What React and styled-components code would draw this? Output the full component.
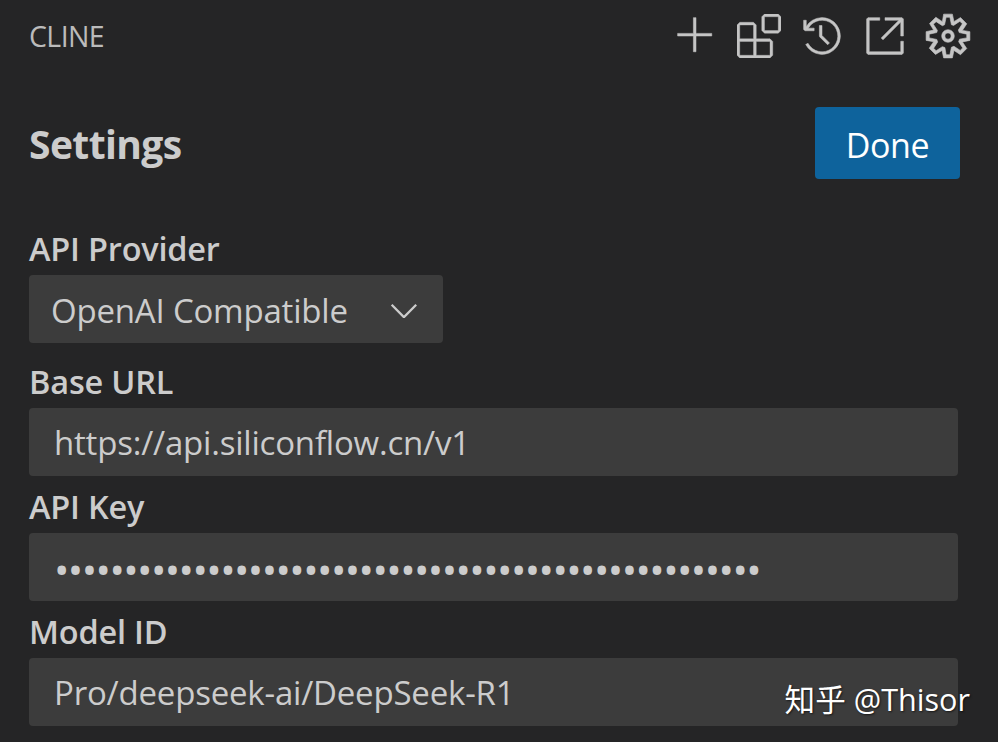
import React from 'react';
import styled, { createGlobalStyle } from 'styled-components';
import { VscAdd, VscExtensions, VscHistory, VscLinkExternal, VscGear, VscChevronDown } from 'react-icons/vsc';

const FONT = `"Open Sans", "Noto Sans", "Noto Sans CJK SC", sans-serif`;

const GlobalStyle = createGlobalStyle`
  html, body {
    margin: 0;
    padding: 0;
    background: #252526;
  }
  * { box-sizing: border-box; }
`;

export default function App() {
  return (
    <>
      <GlobalStyle />
      <Page>
        <Toolbar>
          <ViewTitle>CLINE</ViewTitle>
          <Actions>
            <ActionIcon><VscAdd size={42} /></ActionIcon>
            <ActionIcon><VscExtensions size={44} /></ActionIcon>
            <ActionIcon><VscHistory size={42} /></ActionIcon>
            <ActionIcon><VscLinkExternal size={42} /></ActionIcon>
            <ActionIcon><VscGear size={50} /></ActionIcon>
          </Actions>
        </Toolbar>
        <Header>
          <Title>Settings</Title>
          <DoneButton>Done</DoneButton>
        </Header>
        <Form>
          <SelectField>
            <Label>API Provider</Label>
            <Select>
              <span>OpenAI Compatible</span>
              <VscChevronDown size={42} />
            </Select>
          </SelectField>
          <Field>
            <Label>Base URL</Label>
            <TextBox>https://api.siliconflow.cn/v1</TextBox>
          </Field>
          <Field>
            <Label>API Key</Label>
            <TextBox><Dots>{'•'.repeat(51)}</Dots></TextBox>
          </Field>
          <Field>
            <Label>Model ID</Label>
            <TextBox>Pro/deepseek-ai/DeepSeek-R1</TextBox>
          </Field>
        </Form>
        <Watermark>知乎 @Thisor</Watermark>
      </Page>
    </>
  );
}

const Page = styled.div`
  position: relative;
  width: 998px;
  height: 742px;
  overflow: hidden;
  padding: 14px 40px 0 29px;
  background: #252526;
  color: #cccccc;
  font-family: ${FONT};
`;

const Toolbar = styled.div`
  display: flex;
  align-items: center;
  justify-content: space-between;
  height: 43px;
  margin-right: -21px;
`;

const ViewTitle = styled.div`
  font-size: 28.5px;
  letter-spacing: -0.6px;
  color: #bbbbbb;
`;

const Actions = styled.div`
  display: flex;
  align-items: center;
`;

const ActionIcon = styled.div`
  display: flex;
  align-items: center;
  justify-content: center;
  width: 63px;
  color: #c5c5c5;

  svg {
    stroke-width: 0.2px;
  }
`;

const Header = styled.div`
  display: flex;
  align-items: center;
  justify-content: space-between;
  margin: 50px -2px 0 0;
`;

const Title = styled.h1`
  margin: 0;
  font-size: 39px;
  font-weight: 700;
  letter-spacing: -0.6px;
  color: #cccccc;
`;

const DoneButton = styled.div`
  display: flex;
  align-items: center;
  justify-content: center;
  width: 145px;
  height: 72px;
  padding-top: 3px;
  border-radius: 4px;
  background: #0e639c;
  color: #ffffff;
  font-size: 34px;
  letter-spacing: -0.4px;
`;

const Form = styled.div`
  display: flex;
  flex-direction: column;
  gap: 5px;
  margin-top: 44px;
`;

const Field = styled.div`
  display: flex;
  flex-direction: column;
  align-items: flex-start;
`;

const SelectField = styled(Field)`
  margin-bottom: 8px;
`;

const Label = styled.label`
  display: block;
  height: 52px;
  line-height: 52px;
  font-size: 32.5px;
  font-weight: 600;
  letter-spacing: -0.2px;
  color: #cccccc;
`;

const Select = styled.div`
  display: flex;
  align-items: center;
  justify-content: space-between;
  width: 414px;
  height: 68px;
  padding: 2px 18px 0 22px;
  border-radius: 4px;
  background: #3c3c3c;
  font-size: 33px;
  letter-spacing: -0.2px;
  color: #cccccc;
`;

const TextBox = styled.div`
  display: flex;
  align-items: center;
  width: 929px;
  height: 68px;
  padding: 1px 25px 0;
  border-radius: 4px;
  background: #3c3c3c;
  font-size: 33px;
  letter-spacing: -0.2px;
  color: #cccccc;
`;

const Dots = styled.span`
  margin-top: 4px;
  font-size: 41px;
  line-height: 1;
  letter-spacing: -1.57px;
`;

const Watermark = styled.div`
  position: absolute;
  right: 28px;
  top: 676px;
  font-size: 30.6px;
  color: #ffffff;
  text-shadow: 1px 1px 2px rgba(0, 0, 0, 0.6);
`;
